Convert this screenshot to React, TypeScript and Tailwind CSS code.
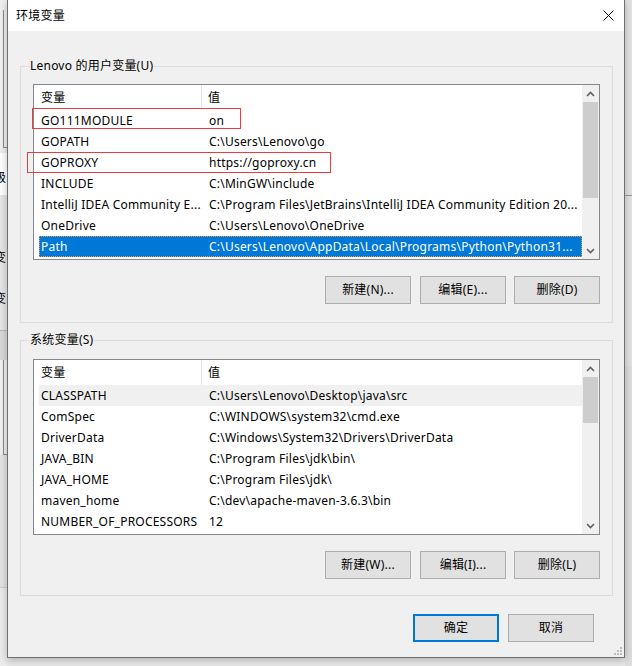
const font = { fontFamily: '"Noto Sans", "Noto Sans CJK SC", sans-serif' };

type Row = { name: string; value: string; selected?: boolean; hover?: boolean };

const userVars: Row[] = [
  { name: "GO111MODULE", value: "on" },
  { name: "GOPATH", value: "C:\\Users\\Lenovo\\go" },
  { name: "GOPROXY", value: "https://goproxy.cn" },
  { name: "INCLUDE", value: "C:\\MinGW\\include" },
  { name: "IntelliJ IDEA Community E...", value: "C:\\Program Files\\JetBrains\\IntelliJ IDEA Community Edition 20..." },
  { name: "OneDrive", value: "C:\\Users\\Lenovo\\OneDrive" },
  { name: "Path", value: "C:\\Users\\Lenovo\\AppData\\Local\\Programs\\Python\\Python31...", selected: true },
];

const sysVars: Row[] = [
  { name: "CLASSPATH", value: "C:\\Users\\Lenovo\\Desktop\\java\\src", hover: true },
  { name: "ComSpec", value: "C:\\WINDOWS\\system32\\cmd.exe" },
  { name: "DriverData", value: "C:\\Windows\\System32\\Drivers\\DriverData" },
  { name: "JAVA_BIN", value: "C:\\Program Files\\jdk\\bin\\" },
  { name: "JAVA_HOME", value: "C:\\Program Files\\jdk\\" },
  { name: "maven_home", value: "C:\\dev\\apache-maven-3.6.3\\bin" },
  { name: "NUMBER_OF_PROCESSORS", value: "12" },
];

const Chevron = ({ up }: { up?: boolean }) => (
  <svg width="9" height="6" viewBox="0 0 9 6">
    <path
      d={up ? "M1 5 L4.5 1.5 L8 5" : "M1 1 L4.5 4.5 L8 1"}
      fill="none"
      stroke="#606060"
      strokeWidth="1.6"
    />
  </svg>
);

const ScrollBar = ({ thumbTop, thumbH }: { thumbTop: number; thumbH: number }) => (
  <div className="flex w-[17px] flex-col bg-[#f0f0f0]">
    <div className="flex h-[17px] items-center justify-center">
      <Chevron up />
    </div>
    <div className="flex-1">
      <div className="mx-[1px] bg-[#cdcdcd]" style={{ marginTop: thumbTop, height: thumbH }} />
    </div>
    <div className="flex h-[17px] items-center justify-center">
      <Chevron />
    </div>
  </div>
);

const VarList = ({ rows, thumbTop, thumbH }: { rows: Row[]; thumbTop: number; thumbH: number }) => (
  <div className="flex h-[176px] overflow-hidden border border-[#828790] bg-white">
    <div className="w-[5px]" />
    <div className="w-[543px] overflow-hidden">
      <div className="flex h-[25px] items-center">
        <div className="h-full w-[163px] border-r border-[#e5e5e5] pl-[2px] leading-[25px]">变量</div>
        <div className="pl-[6px] leading-[25px]">值</div>
      </div>
      {rows.map((r) => (
        <div
          key={r.name}
          className={
            "flex h-[21px] leading-[21px] whitespace-nowrap " +
            (r.selected
              ? "bg-[#0078d7] text-white outline outline-1 outline-dotted outline-offset-[-1px] outline-[#f39a3c]"
              : r.hover
                ? "bg-[#f0f0f0]"
                : "")
          }
        >
          <div className="w-[168px] shrink-0 overflow-hidden pl-[2px]">{r.name}</div>
          <div className="overflow-hidden pl-[2px]">{r.value}</div>
        </div>
      ))}
    </div>
    <ScrollBar thumbTop={thumbTop} thumbH={thumbH} />
  </div>
);

const Btn = ({ label, primary, className = "" }: { label: string; primary?: boolean; className?: string }) => (
  <div
    className={
      "flex h-[28px] w-[86px] items-center justify-center bg-[#e1e1e1] " +
      (primary ? "border-2 border-[#0078d7] " : "border border-[#adadad] ") +
      className
    }
  >
    {label}
  </div>
);

const Group = ({
  title,
  children,
  className = "",
}: {
  title: string;
  children: React.ReactNode;
  className?: string;
}) => (
  <div className={"relative border border-[#dcdcdc] px-[12px] " + className}>
    <div className="absolute left-[8px] top-[-10px] bg-[#f0f0f0] px-[1px] leading-[18px]">{title}</div>
    {children}
  </div>
);

export default function App() {
  return (
    <div
      className="relative flex h-[666px] w-[632px] overflow-hidden bg-[#e8e8e8] text-[12px] tracking-[0.22px] text-black"
      style={font}
    >
      {/* background window at left edge */}
      <div className="absolute left-0 top-0 flex h-full w-[7px] flex-col bg-[#f0f0f0]">
        <div className="ml-[3px] mt-[10px] h-[138px] border-b border-l border-[#8c8c8c]" />
        <div className="mt-[5px] h-[42px] overflow-hidden bg-white">
          <div className="ml-[-6px] mt-[18px] leading-[14px]">级</div>
        </div>
        <div className="h-[135px] overflow-hidden bg-[#e6e6e6]">
          <div className="ml-[-6px] mt-[56px] leading-[14px]">变</div>
          <div className="ml-[-6px] mt-[27px] leading-[14px]">变</div>
        </div>
        <div className="h-[30px] border-t border-[#b9b9b9] bg-[#d9d9d9]" />
        <div className="ml-[3px] h-[95px] border-b border-l border-[#8c8c8c]" />
        <div className="h-[132px] bg-[#e3e3e3]" />
        <div className="flex-1 border-t border-[#cfcfcf] bg-[#ececec]" />
      </div>
      {/* background window at right edge */}
      <div className="absolute right-0 top-0 flex h-full w-[7px] flex-col bg-[#e2e2e2]">
        <div className="h-[196px] border-b border-[#9a9a9a]" />
        <div className="h-[170px]" />
        <div className="flex-1 bg-[#dedede]" />
      </div>

      {/* dialog */}
      <div className="relative ml-[7px] flex h-[658px] w-[618px] flex-col border-x border-b border-[#707070] bg-[#f0f0f0] shadow-[0_2px_8px_rgba(0,0,0,0.25)]">
        <div className="flex h-[31px] items-center justify-between bg-white pl-[8px] pr-[10px]">
          <span>环境变量</span>
          <svg width="11" height="11" viewBox="0 0 11 11">
            <path d="M0.5 0.5 L10.5 10.5 M10.5 0.5 L0.5 10.5" stroke="#000" strokeWidth="1" />
          </svg>
        </div>

        <Group title="Lenovo 的用户变量(U)" className="ml-[12px] mt-[35px] h-[257px] w-[593px] pt-[17px]">
          <VarList rows={userVars} thumbTop={0} thumbH={96} />
          <div className="mt-[16px] flex justify-end gap-[8px]">
            <Btn label="新建(N)..." className="mr-[1px]" />
            <Btn label="编辑(E)..." />
            <Btn label="删除(D)" />
          </div>
        </Group>

        <Group title="系统变量(S)" className="ml-[12px] mt-[17px] h-[256px] w-[593px] pt-[18px]">
          <VarList rows={sysVars} thumbTop={0} thumbH={46} />
          <div className="mt-[16px] flex justify-end gap-[8px]">
            <Btn label="新建(W)..." className="mr-[1px]" />
            <Btn label="编辑(I)..." />
            <Btn label="删除(L)" />
          </div>
        </Group>

        <div className="mt-[18px] flex justify-end gap-[9px] pr-[30px]">
          <Btn label="确定" primary />
          <Btn label="取消" />
        </div>

        {/* resize grip */}
        <svg className="absolute bottom-[2px] right-[2px]" width="9" height="9" viewBox="0 0 9 9">
          <rect x="7" y="1" width="2" height="2" fill="#bdbdbd" />
          <rect x="4" y="4" width="2" height="2" fill="#bdbdbd" />
          <rect x="7" y="4" width="2" height="2" fill="#bdbdbd" />
          <rect x="1" y="7" width="2" height="2" fill="#bdbdbd" />
          <rect x="4" y="7" width="2" height="2" fill="#bdbdbd" />
          <rect x="7" y="7" width="2" height="2" fill="#bdbdbd" />
        </svg>
      </div>

      {/* red annotation boxes */}
      <div className="absolute left-[32px] top-[108px] h-[21px] w-[209px] border-[1.5px] border-[#ee3b3b]" />
      <div className="absolute left-[27px] top-[152px] h-[21px] w-[304px] border-[1.5px] border-[#ee3b3b]" />
    </div>
  );
}
